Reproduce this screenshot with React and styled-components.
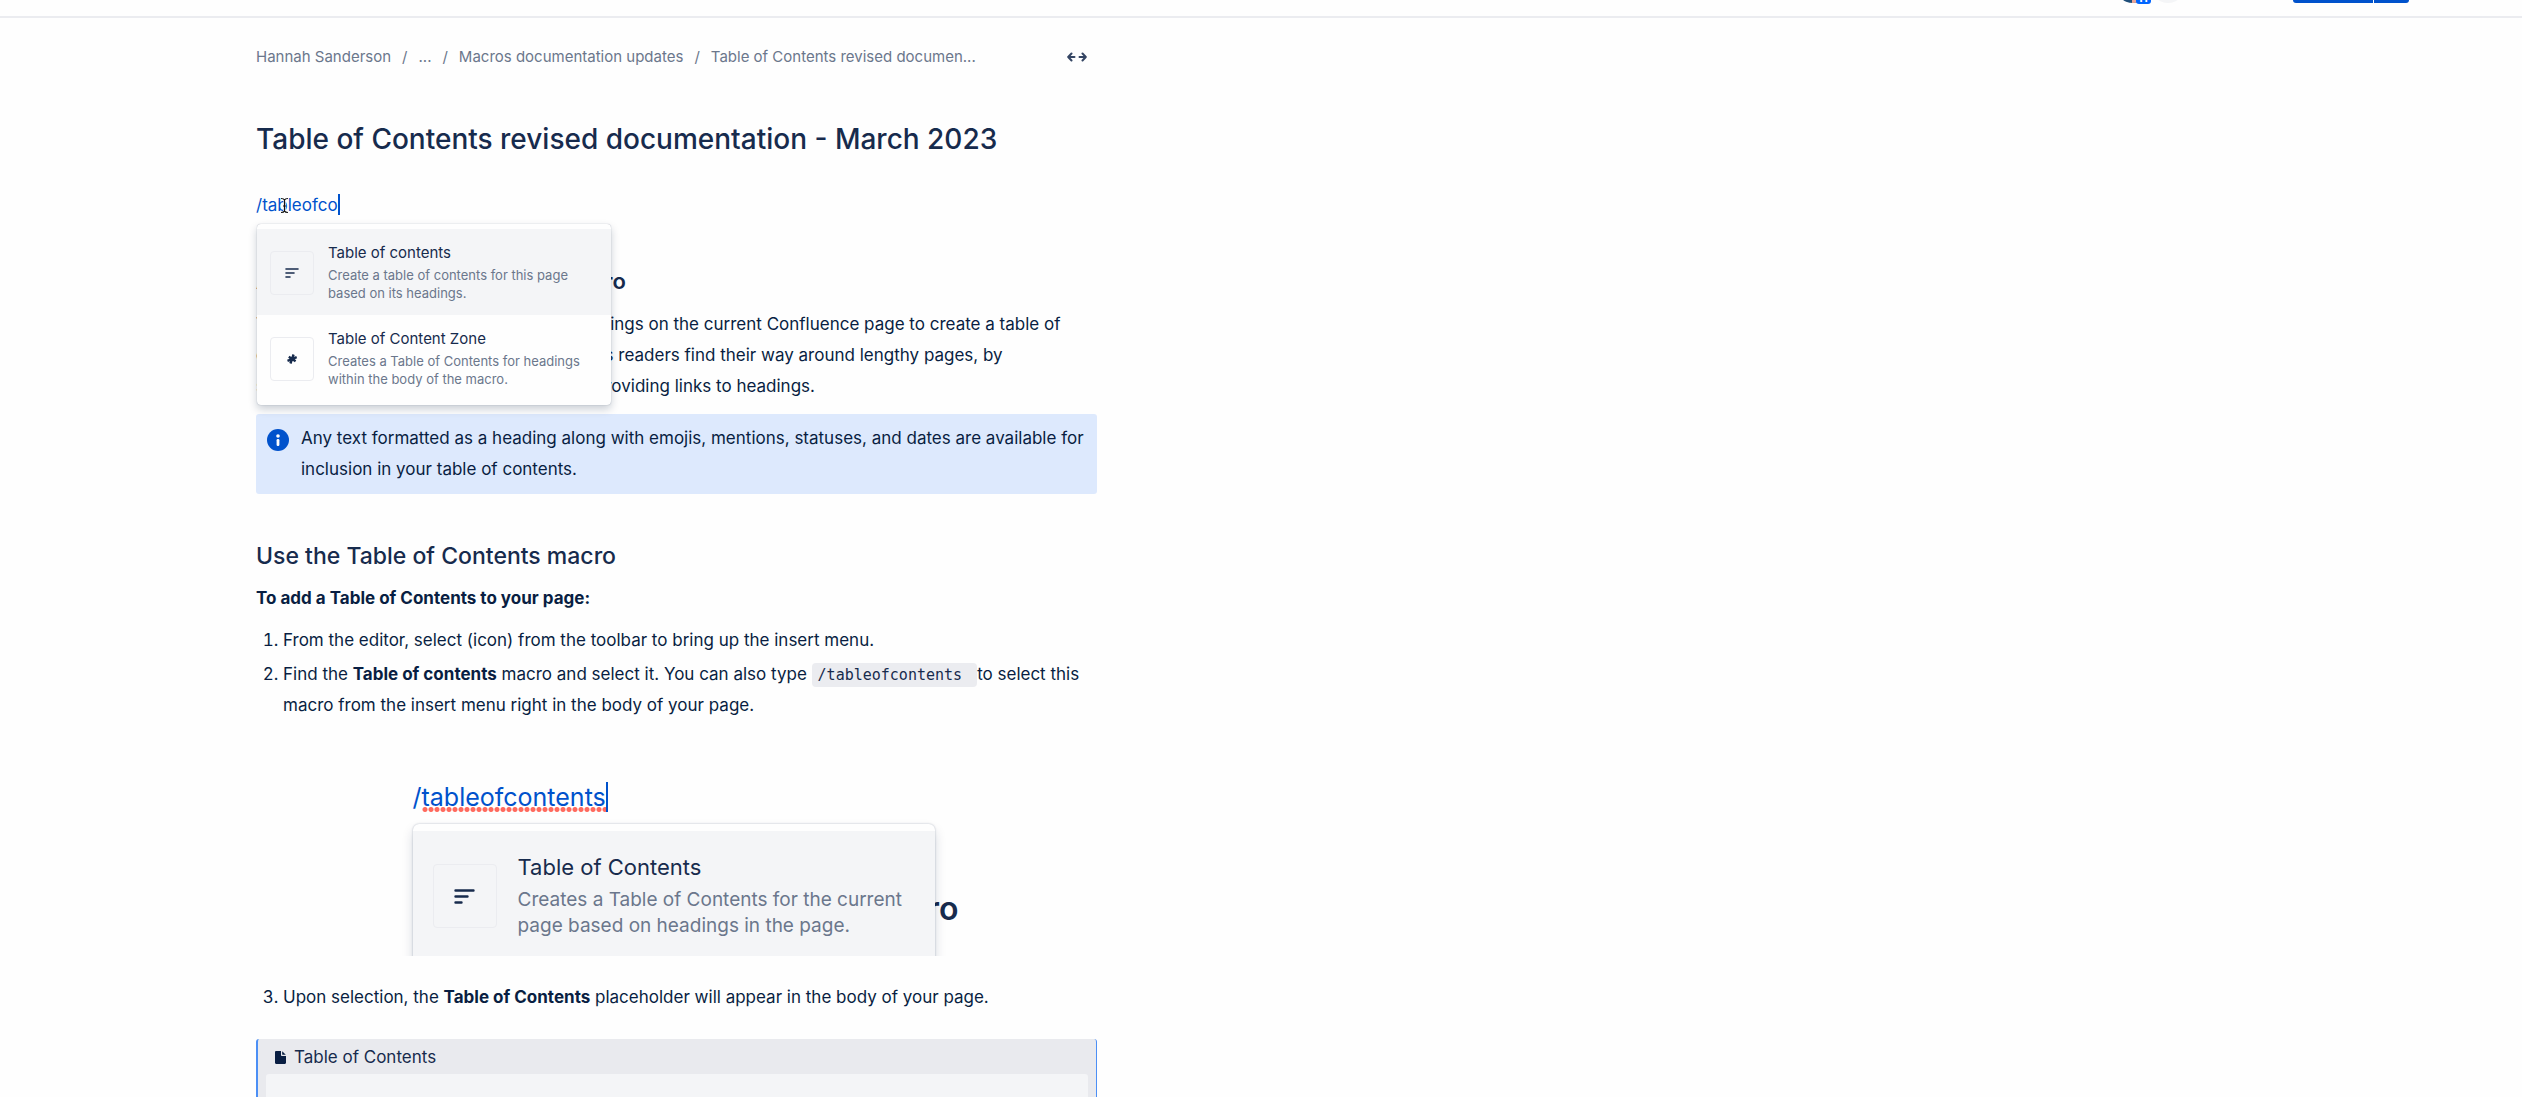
import React, { useState } from "react";
import styled, { createGlobalStyle } from "styled-components";

const GlobalStyle = createGlobalStyle`
  * {
    box-sizing: border-box;
  }

  body {
    margin: 0;
    background: #fefefe;
    color: #172b4d;
    font-family: Inter, "Liberation Sans", sans-serif;
    font-size: 17px;
    line-height: 31px;
  }

  button {
    font: inherit;
    color: inherit;
    border: none;
    padding: 0;
    cursor: pointer;
  }
`;

const Page = styled.div`
  height: 100vh;
  overflow: hidden;
`;

/* top bar, scrolled almost out of view */

const TopBar = styled.header`
  display: flex;
  align-items: flex-end;
  justify-content: flex-end;
  height: 18px;
  padding: 0 113px 13px 0;
  border-bottom: 2px solid #ebecf0;
  overflow: hidden;
`;

const Avatar = styled.div`
  position: relative;
  flex: none;
  width: 36px;
  height: 36px;

  svg {
    display: block;
    border-radius: 50%;
  }
`;

const AvatarBadge = styled.span`
  position: absolute;
  right: 0;
  bottom: -1px;
  width: 15px;
  height: 14px;
  border-radius: 3px;
  background: #0065ff;
  color: #fff;
  font-size: 11px;
  font-weight: 700;
  line-height: 16px;
  text-align: center;
`;

const InviteButton = styled.button`
  flex: none;
  width: 34px;
  height: 36px;
  margin-right: 108px;
  border-radius: 50%;
  background: #f4f5f7;
`;

const PublishGroup = styled.div`
  display: flex;
  flex: none;
  gap: 1px;
`;

const PublishButton = styled.button`
  width: ${({ $narrow }) => ($narrow ? "35px" : "80px")};
  height: 36px;
  border-radius: ${({ $narrow }) => ($narrow ? "0 3px 3px 0" : "3px 0 0 3px")};
  background: #0052cc;
`;

/* document column */

const Document = styled.main`
  max-width: 1097px;
  padding: 29px 0 0 256px;
`;

const BreadcrumbRow = styled.div`
  display: flex;
  align-items: center;
  justify-content: space-between;
  padding-right: 10px;
`;

const Breadcrumbs = styled.ol`
  display: flex;
  margin: 0;
  padding: 0;
  list-style: none;
  color: #6b778c;
  font-size: 15px;
  line-height: 20px;
`;

const Crumb = styled.li`
  display: flex;

  & + &::before {
    content: "/";
    margin: 0 11px;
  }

  a {
    color: inherit;
    text-decoration: none;
  }
`;

const WidthButton = styled.button`
  display: flex;
  background: none;
`;

const Title = styled.h1`
  margin: 55px 0 34px;
  font-size: 28px;
  font-weight: 500;
  line-height: 34px;
`;

const QueryLine = styled.div`
  position: relative;
  color: #0052cc;
`;

const Caret = styled.span`
  display: inline-block;
  width: 2px;
  height: ${({ $large }) => ($large ? "30px" : "21px")};
  background: #0052cc;
  vertical-align: ${({ $large }) => ($large ? "-6px" : "-4px")};
`;

const Pointer = styled.svg`
  position: absolute;
  left: 24px;
  top: 7px;
`;

/* typeahead menu */

const Menu = styled.div`
  position: absolute;
  z-index: 1;
  top: 34px;
  left: 1px;
  width: 354px;
  padding: 5px 0 4px;
  border-radius: 4px;
  background: #fefefe;
  box-shadow: 0 0 1px rgba(9, 30, 66, 0.4), 0 4px 8px rgba(9, 30, 66, 0.22);
`;

const MenuItem = styled.button`
  display: flex;
  align-items: center;
  gap: 14px;
  width: 100%;
  padding: 14px 13px 13px;
  background: ${({ $selected }) => ($selected ? "#f4f5f7" : "#fefefe")};
  text-align: left;
`;

const MenuIcon = styled.span`
  display: flex;
  flex: none;
  align-items: center;
  justify-content: center;
  width: ${({ $large }) => ($large ? "64px" : "44px")};
  height: ${({ $large }) => ($large ? "64px" : "44px")};
  border: 1px solid #ebecf0;
  border-radius: 4px;
`;

const MenuText = styled.span`
  display: flex;
  flex-direction: column;
  gap: 3px;
`;

const MenuTitle = styled.span`
  color: #172b4d;
  font-size: 15px;
  line-height: 20px;
`;

const MenuDescription = styled.span`
  color: #6b778c;
  font-size: 13px;
  line-height: 18px;
`;

/* body content */

const MacroHeading = styled.h2`
  margin: 46px 0 14px;
  font-size: 22px;
  font-weight: 600;
  line-height: 28px;
`;

const SectionHeading = styled.h2`
  margin: 48px 0 13px;
  font-size: 23px;
  font-weight: 500;
  line-height: 28px;
`;

const Paragraph = styled.p`
  margin: 0;
  color: #091e42;
`;

const InfoPanel = styled.div`
  display: flex;
  gap: 12px;
  margin-top: 12px;
  padding: 9px 11px;
  border-radius: 3px;
  background: #dde9fd;

  svg {
    flex: none;
    margin-top: 6px;
  }
`;

const Steps = styled.ol`
  display: flex;
  flex-direction: column;
  gap: 3px;
  margin: 11px 0 0;
  padding-left: 27px;
  color: #091e42;
`;

const Code = styled.code`
  padding: 3px 6px;
  border-radius: 4px;
  background: #ebecf0;
  color: #172b4d;
  font-family: "DejaVu Sans Mono", monospace;
  font-size: 15px;
  line-height: 20px;
  white-space: pre;
`;

const Figure = styled.figure`
  position: relative;
  max-width: 564px;
  margin: 58px auto 26px;
  padding: 0 0 27px 18px;
  overflow: hidden;
`;

const FigureQuery = styled.div`
  color: #0052cc;
  font-size: 25px;
  line-height: 36px;
`;

const Misspelled = styled.span`
  background: radial-gradient(circle, #ff6a5e 2px, transparent 3px) 0 100% / 6px 5px repeat-x;
`;

const FigureHeading = styled.div`
  margin-top: 74px;
  font-size: 32px;
  font-weight: 600;
  line-height: 40px;
  text-align: right;
  white-space: nowrap;
`;

const FigureMenu = styled.div`
  position: absolute;
  top: 45px;
  left: 18px;
  width: 522px;
  padding-top: 7px;
  border-radius: 6px;
  background: #fefefe;
  box-shadow: 0 0 2px rgba(9, 30, 66, 0.3), 0 6px 12px rgba(9, 30, 66, 0.16);
`;

const FigureItem = styled.div`
  display: flex;
  align-items: center;
  gap: 21px;
  padding: 22px 20px 34px;
  background: #f4f5f7;

  ${MenuText} {
    gap: 6px;
  }

  ${MenuTitle} {
    font-size: 22px;
    line-height: 28px;
  }

  ${MenuDescription} {
    font-size: 19px;
    line-height: 26px;
  }
`;

const Macro = styled.section`
  margin-top: 26px;
  padding: 6px 8px 8px;
  border-left: 2px solid #4c8ff5;
  border-right: 1px solid #4c8ff5;
  border-radius: 3px 3px 0 0;
  background: #e9eaee;
`;

const MacroHeader = styled.div`
  display: flex;
  align-items: center;
  gap: 8px;
  padding: 0 9px 5px;
  line-height: 24px;
`;

const MacroBody = styled.div`
  height: 80px;
  border-radius: 3px;
  background: #f4f5f7;
`;

const LinesIcon = ({ size = 14 }) => (
  <svg width={size} height={size} viewBox="0 0 14 14" fill="none" stroke="#172b4d" strokeWidth="1.6" strokeLinecap="round">
    <path d="M1 3h12M1 7h8M1 11h4" />
  </svg>
);

const MacroIcon = () => (
  <svg width="12" height="12" viewBox="0 0 12 12" fill="none" stroke="#172b4d" strokeWidth="2.4">
    <path d="M7.600 1.500 4.400 10.500M1.500 7.800 10.700 4.200M2.800 3.800 9.600 8.200" />
  </svg>
);

const WidthIcon = () => (
  <svg width="20" height="10" viewBox="0 0 20 10" fill="none" stroke="#344563" strokeWidth="2" strokeLinecap="round" strokeLinejoin="round">
    <path d="M4.500 1.500 1.200 5l3.300 3.500M1.500 5h6M15.500 1.500 18.800 5l-3.300 3.500M18.500 5h-6" />
  </svg>
);

const InfoIcon = () => (
  <svg width="22" height="22" viewBox="0 0 22 22">
    <circle cx="11" cy="11" r="11" fill="#0052cc" />
    <circle cx="11" cy="7" r="1.8" fill="#fff" />
    <rect x="9.6" y="10" width="2.8" height="7" rx="1.2" fill="#fff" />
  </svg>
);

const PageIcon = () => (
  <svg width="11" height="13" viewBox="0 0 11 13">
    <path fill="#091e42" d="M1.200 0H6v4.200c0 .5.3.8.8.8H11v6.800c0 .7-.5 1.200-1.200 1.200H1.200C.5 13 0 12.500 0 11.800V1.200C0 .5.5 0 1.200 0z" />
    <path fill="#091e42" d="M7.200.2 10.800 3.800H7.200z" />
  </svg>
);

const crumbs = [
  "Hannah Sanderson",
  "...",
  "Macros documentation updates",
  "Table of Contents revised documen...",
];

const suggestions = [
  {
    title: "Table of contents",
    description: "Create a table of contents for this page based on its headings.",
    Icon: LinesIcon,
  },
  {
    title: "Table of Content Zone",
    description: "Creates a Table of Contents for headings within the body of the macro.",
    Icon: MacroIcon,
  },
];

const beam =
  "M1 1.500c1.800 0 3 .4 3.500 1.500C5 1.900 6.200 1.500 8 1.500M4.500 3v11M1 15.500c1.800 0 3-.4 3.500-1.500.5 1.100 1.700 1.500 3.500 1.500M3 9h3";

const Typeahead = () => {
  const [selected, setSelected] = useState(0);

  return (
    <QueryLine>
      /tableofco
      <Caret />
      <Pointer width="9" height="17" viewBox="0 0 9 17" fill="none">
        <path d={beam} stroke="#fff" strokeWidth="2.4" />
        <path d={beam} stroke="#111" strokeWidth="1.2" />
      </Pointer>
      <Menu>
        {suggestions.map(({ title, description, Icon }, i) => (
          <MenuItem key={title} $selected={i === selected} onClick={() => setSelected(i)}>
            <MenuIcon>
              <Icon />
            </MenuIcon>
            <MenuText>
              <MenuTitle>{title}</MenuTitle>
              <MenuDescription>{description}</MenuDescription>
            </MenuText>
          </MenuItem>
        ))}
      </Menu>
    </QueryLine>
  );
};

const InsertExample = () => (
  <Figure>
    <FigureQuery>
      /<Misspelled>tableofcontents</Misspelled>
      <Caret $large />
    </FigureQuery>
    <FigureHeading>About the Table of Contents macro</FigureHeading>
    <FigureMenu>
      <FigureItem>
        <MenuIcon $large>
          <LinesIcon size={21} />
        </MenuIcon>
        <MenuText>
          <MenuTitle>Table of Contents</MenuTitle>
          <MenuDescription>
            Creates a Table of Contents for the current page based on headings in the page.
          </MenuDescription>
        </MenuText>
      </FigureItem>
    </FigureMenu>
  </Figure>
);

export default function App() {
  return (
    <Page>
      <GlobalStyle />
      <TopBar>
        <Avatar>
          <svg width="36" height="36" viewBox="0 0 36 36">
            <rect width="36" height="36" fill="#1f4e79" />
            <path d="M17 36V22h12v14z" fill="#e8a598" />
          </svg>
          <AvatarBadge>H</AvatarBadge>
        </Avatar>
        <InviteButton aria-label="Invite" />
        <PublishGroup>
          <PublishButton aria-label="Publish" />
          <PublishButton $narrow aria-label="Publish options" />
        </PublishGroup>
      </TopBar>

      <Document>
        <BreadcrumbRow>
          <Breadcrumbs>
            {crumbs.map((name) => (
              <Crumb key={name}>
                <a href="#">{name}</a>
              </Crumb>
            ))}
          </Breadcrumbs>
          <WidthButton aria-label="Make page full width">
            <WidthIcon />
          </WidthButton>
        </BreadcrumbRow>

        <Title>Table of Contents revised documentation - March 2023</Title>

        <Typeahead />

        <MacroHeading>About the Table of Contents macro</MacroHeading>
        <Paragraph>
          This Table of Contents macro uses the headings on the current Confluence page to create a
          table of contents. Providing a table of contents helps readers find their way around
          lengthy pages, by summarizing this document structure and providing links to headings.
        </Paragraph>

        <InfoPanel>
          <InfoIcon />
          <Paragraph>
            Any text formatted as a heading along with emojis, mentions, statuses, and dates are
            available for inclusion in your table of contents.
          </Paragraph>
        </InfoPanel>

        <SectionHeading>Use the Table of Contents macro</SectionHeading>
        <Paragraph>
          <strong>To add a Table of Contents to your page:</strong>
        </Paragraph>

        <Steps>
          <li>From the editor, select (icon) from the toolbar to bring up the insert menu.</li>
          <li>
            Find the <strong>Table of contents</strong> macro and select it. You can also type{" "}
            <Code>{"/tableofcontents "}</Code>to select this macro from the insert menu right in the
            body of your page.
          </li>
        </Steps>

        <InsertExample />

        <Steps start={3}>
          <li>
            Upon selection, the <strong>Table of Contents</strong> placeholder will appear in the
            body of your page.
          </li>
        </Steps>

        <Macro>
          <MacroHeader>
            <PageIcon />
            Table of Contents
          </MacroHeader>
          <MacroBody />
        </Macro>
      </Document>
    </Page>
  );
}
